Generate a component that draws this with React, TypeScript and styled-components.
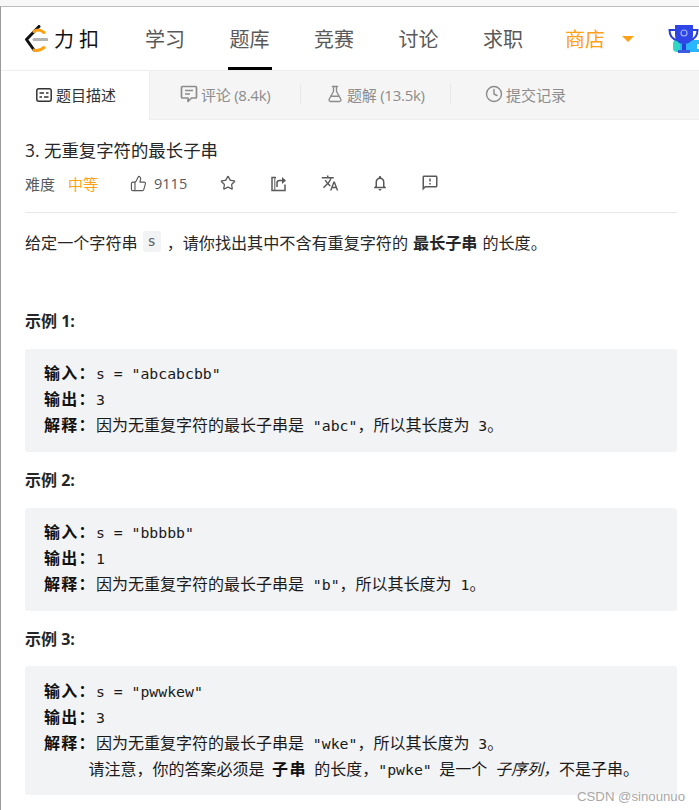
import React from "react";
import styled, { createGlobalStyle } from "styled-components";
import { Clock, FlaskConical, Star, ThumbsUp } from "lucide-react";
import { MdTranslate, MdNotificationsNone, MdOutlineFeedback } from "react-icons/md";

const Global = createGlobalStyle`
  html, body { margin: 0; padding: 0; background: #fff; }
  body { font-family: "Open Sans", "Noto Sans CJK SC", sans-serif; overflow: hidden; }
  * { box-sizing: border-box; }
`;

const Page = styled.div`
  position: relative;
  width: 699px;
  height: 810px;
  overflow: hidden;
  padding-top: 6px;
  background: #f7f7f7;
`;

const Frame = styled.div`
  height: 804px;
  border-top: 1px solid #bdbdbd;
  border-left: 1px solid #9a9a9a;
  background: #fff;
`;

const Nav = styled.div`
  display: flex;
  align-items: stretch;
  height: 64px;
  padding-left: 23px;
  border-bottom: 1px solid #eeeeee;
`;

const Logo = styled.div`
  display: flex;
  flex: none;
  align-items: center;
  gap: 6px;
  width: 119px;
  font-family: "Noto Sans CJK SC", sans-serif;
  font-size: 20px;
  letter-spacing: 5px;
  color: #111;
`;

const NavItem = styled.div<{ $active?: boolean; $shop?: boolean }>`
  display: flex;
  flex: none;
  align-items: center;
  justify-content: center;
  width: 44px;
  margin-right: 40.5px;
  margin-left: ${(p) => (p.$shop ? "-2.5px" : "0")};
  font-family: "Noto Sans CJK SC", sans-serif;
  font-size: 20px;
  color: ${(p) => (p.$shop ? "#ffa116" : "#595959")};
  border-bottom: 3px solid ${(p) => (p.$active ? "#000" : "transparent")};
  padding-top: 3px;
`;

const Caret = styled.div`
  flex: none;
  width: 0;
  height: 0;
  margin: 29px 34px 0 -25.5px;
  border-left: 6px solid transparent;
  border-right: 6px solid transparent;
  border-top: 6px solid #ffa116;
`;

const TrophyBox = styled.div`
  flex: none;
  display: flex;
  align-items: center;
`;

const Tabs = styled.div`
  display: flex;
  height: 49px;
  font-size: 15px;
`;

const ActiveTab = styled.div`
  display: flex;
  align-items: center;
  gap: 4px;
  width: 148px;
  padding: 0 0 2px 35px;
  color: #333;
`;

const TabRest = styled.div`
  flex: 1;
  display: flex;
  align-items: center;
  padding: 0 0 2px 30px;
  background: #f5f5f5;
  border-left: 1px solid #eeeeee;
  border-bottom: 1px solid #eeeeee;
`;

const Tab = styled.div<{ $w: number }>`
  display: flex;
  align-items: center;
  gap: 3px;
  flex: none;
  width: ${(p) => p.$w}px;
  color: #8c8c8c;
`;

const Count = styled.span`
  letter-spacing: -0.25px;
`;

const TabDivider = styled.div<{ $after: number }>`
  flex: none;
  width: 1px;
  height: 20px;
  background: #e8e8e8;
  margin-right: ${(p) => p.$after}px;
`;

const Content = styled.div`
  padding: 0 22px 0 24px;
`;

const Title = styled.div`
  margin-top: 18px;
  height: 24px;
  line-height: 24px;
  font-size: 17.4px;
  color: #262626;
`;

const Meta = styled.div`
  display: flex;
  align-items: center;
  height: 24px;
  margin-top: 9px;
  font-size: 15px;
  color: #595959;
`;

const Difficulty = styled.span`
  color: #ffa116;
  margin-left: 13px;
  margin-right: 32px;
`;

const Likes = styled.div`
  display: flex;
  align-items: center;
  gap: 7px;
  width: 90px;
  font-size: 14.5px;
`;

const MetaIcon = styled.div`
  display: flex;
  flex: none;
  width: 50.3px;
`;

const Rule = styled.div`
  height: 1px;
  background: #e8e8e8;
  margin-top: 17px;
`;

const Para = styled.div`
  margin-top: 18px;
  height: 22px;
  line-height: 22px;
  font-size: 16.1px;
  color: #262626;
  font-family: "Noto Sans CJK SC", sans-serif;
`;

const InlineCode = styled.code`
  display: inline-block;
  width: 18px;
  height: 21px;
  line-height: 21px;
  margin: 0 6px 0 5px;
  text-align: center;
  background: #f2f3f5;
  border-radius: 3px;
  font-family: "DejaVu Sans Mono", monospace;
  font-size: 14px;
  color: #5c5c5c;
  vertical-align: top;
`;

const Strong = styled.strong`
  font-weight: 700;
  margin: 0 5px 0 5px;
  color: #262626;
`;

const ExampleTitle = styled.div<{ $top: number }>`
  margin-top: ${(p) => p.$top}px;
  height: 22px;
  line-height: 22px;
  font-weight: 700;
  font-size: 16px;
  color: #262626;
`;

const Pre = styled.div<{ $top: number; $pad: number }>`
  margin-top: ${(p) => p.$top}px;
  padding: ${(p) => p.$pad}px 19px ${(p) => 25 - p.$pad}px;
  background: #f2f3f5;
  border-radius: 3px;
  font-family: "Noto Sans CJK SC", sans-serif;
  font-size: 16px;
  line-height: 26px;
  color: #1a1a1a;
`;

const Line = styled.div`
  height: 26px;
  white-space: pre;
  word-spacing: 4px;
`;

const Note = styled(Line)`
  padding-left: 44.5px;
`;

const Label = styled.b`
  font-weight: 700;
  letter-spacing: 1.3px;
  color: #111;
`;

const Mono = styled.span`
  font-family: "DejaVu Sans Mono", monospace;
  font-size: 14.8px;
  word-spacing: 0;
`;

const Em = styled.i`
  font-style: italic;
`;

const Watermark = styled.div`
  position: absolute;
  right: 14px;
  bottom: 5px;
  font-family: "Liberation Sans", sans-serif;
  font-size: 13.2px;
  line-height: 16px;
  color: #a8a8a8;
`;

const LeetLogo = () => (
  <svg width="24" height="28" viewBox="0 0 24 28">
    <path d="M15 1.5 L2.5 14.5 L10 25" fill="none" stroke="#111" strokeWidth="3" strokeLinecap="round" strokeLinejoin="round" />
    <path d="M10 6.5 Q14.5 3 20 7.5" fill="none" stroke="#ffa116" strokeWidth="3" strokeLinecap="round" />
    <path d="M10 25 Q14.5 27 20 22.5" fill="none" stroke="#ffa116" strokeWidth="3" strokeLinecap="round" />
    <path d="M10 14.5 H23" stroke="#b3b3b3" strokeWidth="3" strokeLinecap="round" />
  </svg>
);

const Trophy = () => (
  <svg width="34" height="30" viewBox="0 0 34 30">
    <path d="M5 20 Q5 15 10 15 H14 V28 H9 Q5 28 5 24 Z" fill="#2fd8c0" />
    <rect x="12" y="16" width="22" height="12" rx="2" fill="#2ab6ff" />
    <rect x="29" y="20" width="5" height="5" fill="#fff" />
    <path d="M7 6 H1.5 C1.5 12 4 15 9 16 M25 6 H29.5 C29.5 12 27 15 22 16" fill="none" stroke="#2a3fd8" strokeWidth="2" />
    <path d="M7 1 H25 V11 C25 17 21 20 16 20 C11 20 7 17 7 11 Z" fill="#2f45e6" />
    <rect x="14" y="20" width="4" height="6" fill="#2a3fd8" />
    <rect x="10" y="26" width="12" height="3" fill="#3b5be0" />
    <circle cx="16" cy="9" r="3" fill="none" stroke="#9fb4ff" strokeWidth="1.2" />
  </svg>
);

const DescIcon = () => (
  <svg width="16" height="14" viewBox="0 0 16 14">
    <rect x="0.8" y="0.8" width="14.4" height="12.4" rx="2" fill="none" stroke="#333" strokeWidth="1.5" />
    <path d="M3.5 5 H8 M10 5 H12.5 M3.5 9 H6 M8 9 H12.5" stroke="#333" strokeWidth="1.3" />
  </svg>
);

const CommentIcon = () => (
  <svg width="18" height="18" viewBox="0 0 18 18">
    <path d="M2.5 1.5 H15.5 Q16.5 1.5 16.5 2.5 V12 Q16.5 13 15.5 13 H11.5 L8 16.5 V13 H2.5 Q1.5 13 1.5 12 V2.5 Q1.5 1.5 2.5 1.5 Z" fill="none" stroke="#8c8c8c" strokeWidth="1.7" strokeLinejoin="round" />
    <path d="M5 5.5 H13 M5 9 H10" stroke="#8c8c8c" strokeWidth="1.5" />
  </svg>
);

const ShareIcon = () => (
  <svg width="17" height="17" viewBox="0 0 17 17">
    <path d="M6 2.5 H2 V15.5 H15 V9.5" fill="none" stroke="#595959" strokeWidth="1.5" />
    <path d="M4.8 2.5 V15" stroke="#595959" strokeWidth="1" />
    <path d="M7 12 V8 Q7 5.5 9.5 5.5 H13" fill="none" stroke="#595959" strokeWidth="1.5" />
    <path d="M12 2 L16 5.5 L12 9 Z" fill="#595959" />
  </svg>
);

const examples = [
  { title: "示例 1:", input: '"abcabcbb"', output: "3", sub: '"abc"', len: "3", titleTop: 57, boxTop: 17, pad: 10 },
  { title: "示例 2:", input: '"bbbbb"', output: "1", sub: '"b"', len: "1", titleTop: 17, boxTop: 17, pad: 10 },
  { title: "示例 3:", input: '"pwwkew"', output: "3", sub: '"wke"', len: "3", titleTop: 17, boxTop: 16, pad: 11 },
];

export default function App() {
  return (
    <Page>
      <Global />
      <Frame>
        <Nav>
          <Logo>
            <LeetLogo />
            力扣
          </Logo>
          <NavItem>学习</NavItem>
          <NavItem $active>题库</NavItem>
          <NavItem>竞赛</NavItem>
          <NavItem>讨论</NavItem>
          <NavItem>求职</NavItem>
          <NavItem $shop>商店</NavItem>
          <Caret />
          <TrophyBox>
            <Trophy />
          </TrophyBox>
        </Nav>
        <Tabs>
          <ActiveTab>
            <DescIcon />
            题目描述
          </ActiveTab>
          <TabRest>
            <Tab $w={120}>
              <CommentIcon />
              <Count>评论 (8.4k)</Count>
            </Tab>
            <TabDivider $after={25} />
            <Tab $w={124}>
              <FlaskConical size={18} strokeWidth={1.8} />
              <Count>题解 (13.5k)</Count>
            </Tab>
            <TabDivider $after={34} />
            <Tab $w={120}>
              <Clock size={18} strokeWidth={1.9} />
              提交记录
            </Tab>
          </TabRest>
        </Tabs>
        <Content>
          <Title>3. 无重复字符的最长子串</Title>
          <Meta>
            难度
            <Difficulty>中等</Difficulty>
            <Likes>
              <ThumbsUp size={17} strokeWidth={1.6} />
              9115
            </Likes>
            <MetaIcon><Star size={16} strokeWidth={1.9} /></MetaIcon>
            <MetaIcon><ShareIcon /></MetaIcon>
            <MetaIcon><MdTranslate size={18} /></MetaIcon>
            <MetaIcon><MdNotificationsNone size={18} /></MetaIcon>
            <MetaIcon><MdOutlineFeedback size={18} /></MetaIcon>
          </Meta>
          <Rule />
          <Para>
            给定一个字符串<InlineCode>s</InlineCode>，请你找出其中不含有重复字符的<Strong>最长子串</Strong>的长度。
          </Para>
          {examples.map((ex, i) => (
            <React.Fragment key={ex.title}>
              <ExampleTitle $top={ex.titleTop}>{ex.title}</ExampleTitle>
              <Pre $top={ex.boxTop} $pad={ex.pad}>
                <Line><Label>输入：</Label><Mono>s = {ex.input}</Mono></Line>
                <Line><Label>输出：</Label><Mono>{ex.output}</Mono></Line>
                <Line><Label>解释：</Label>因为无重复字符的最长子串是<Mono> {ex.sub}</Mono>，所以其长度为<Mono> {ex.len}</Mono>。</Line>
                {i === 2 && (
                  <Note>请注意，你的答案必须是 <Label>子串</Label> 的长度，<Mono>"pwke"</Mono> 是一个 <Em>子序列，</Em>不是子串。</Note>
                )}
              </Pre>
            </React.Fragment>
          ))}
        </Content>
      </Frame>
      <Watermark>CSDN @sinounuo</Watermark>
    </Page>
  );
}
